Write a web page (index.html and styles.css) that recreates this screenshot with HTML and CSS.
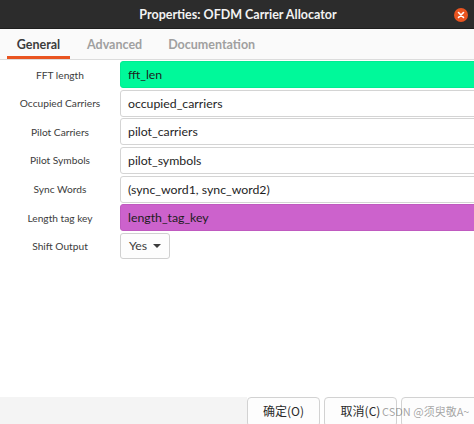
FILE: index.html
```html
<!DOCTYPE html>
<html>
<head>
<meta charset="utf-8">
<link rel="stylesheet" href="styles.css">
</head>
<body>
<div class="window">
  <div class="titlebar">
    <span class="title">Properties: OFDM Carrier Allocator</span>
    <span class="close"><svg width="14" height="14" viewBox="0 0 14 14"><circle cx="7" cy="7" r="7" fill="#e95420"/><path d="M4.5 4.5 L9.5 9.5 M9.5 4.5 L4.5 9.5" stroke="#fff" stroke-width="1.6" stroke-linecap="round"/></svg></span>
  </div>
  <div class="tabs">
    <div class="tab active">General</div>
    <div class="tab">Advanced</div>
    <div class="tab">Documentation</div>
  </div>
  <div class="form">
    <div class="label">FFT length</div><div class="field green">fft_len</div>
    <div class="label">Occupied Carriers</div><div class="field">occupied_carriers</div>
    <div class="label">Pilot Carriers</div><div class="field">pilot_carriers</div>
    <div class="label">Pilot Symbols</div><div class="field">pilot_symbols</div>
    <div class="label">Sync Words</div><div class="field">(sync_word1, sync_word2)</div>
    <div class="label">Length tag key</div><div class="field purple">length_tag_key</div>
    <div class="label">Shift Output</div><div class="combo-cell"><div class="combo">Yes <span class="arrow"></span></div></div>
  </div>
  <div class="spacer"></div>
  <div class="footer">
    <div class="footer-fill"></div>
    <div class="btn">确定(O)</div>
    <div class="btn">取消(C)</div>
    <div class="btn last"></div>
    <div class="watermark">CSDN @须臾敬A~</div>
  </div>
</div>
</body>
</html>
```
FILE: styles.css
```css
html, body {
  margin: 0;
  padding: 0;
  background: #ffffff;
}
body {
  width: 474px;
  height: 424px;
  overflow: hidden;
  font-family: Lato, "Noto Sans CJK SC", sans-serif;
}
.window {
  width: 474px;
  height: 424px;
  display: flex;
  flex-direction: column;
  position: relative;
}
.titlebar {
  height: 29px;
  flex: none;
  background: #2c2c2c;
  border-bottom: 1px solid #1e1e1e;
  box-sizing: border-box;
  display: flex;
  align-items: center;
  justify-content: center;
  position: relative;
}
.title {
  color: #f2f2f2;
  font-weight: bold;
  font-size: 12.5px;
  margin-left: 2px;
}
.close {
  position: absolute;
  right: 6px;
  top: 8px;
  width: 14px;
  height: 14px;
  display: flex;
}
.tabs {
  height: 31px;
  flex: none;
  box-sizing: border-box;
  border-bottom: 1px solid #dcdcdc;
  display: flex;
  padding-left: 7px;
  background: #fafafa;
}
.tab {
  font-size: 12.5px;
  font-weight: bold;
  color: #a0a0a0;
  display: flex;
  align-items: center;
  box-sizing: border-box;
  height: 30px;
  border-bottom: 3px solid transparent;
  padding-top: 3px;
}
.tab.active {
  color: #3c3c3c;
  border-bottom-color: #e95420;
  width: 63px;
  justify-content: center;
  margin-right: 17px;
}
.tab + .tab {
  margin-right: 26px;
}
.form {
  display: grid;
  grid-template-columns: 120px 364px;
  grid-auto-rows: 27px;
  row-gap: 1.67px;
  padding-top: 1px;
  width: 484px;
}
.label {
  font-size: 10.2px;
  color: #3c3c3c;
  display: flex;
  align-items: center;
  justify-content: center;
}
.field {
  box-sizing: border-box;
  border: 1px solid #d4d4d4;
  border-radius: 3px;
  background: #fff;
  font-size: 12.3px;
  color: #1e1e1e;
  display: flex;
  align-items: center;
  padding-left: 7px;
}
.field.green {
  background: #00f99a;
  border-color: #00ec92;
}
.field.purple {
  background: #cc62cc;
  border-color: #c05ac0;
}
.combo-cell {
  display: flex;
}
.combo {
  box-sizing: border-box;
  width: 50px;
  height: 26px;
  border: 1px solid #d0d0d0;
  border-radius: 3px;
  background: #fdfdfd;
  font-size: 12.3px;
  color: #3c3c3c;
  display: flex;
  align-items: center;
  padding-left: 8px;
  gap: 6px;
}
.arrow {
  width: 0;
  height: 0;
  border-left: 4px solid transparent;
  border-right: 4px solid transparent;
  border-top: 4px solid #3c3c3c;
}
.spacer {
  flex: 1;
}
.footer {
  height: 27px;
  flex: none;
  display: flex;
  position: relative;
}
.footer-fill {
  flex: none;
  width: 247px;
  background: #f4f4f4;
}
.btn {
  flex: none;
  box-sizing: border-box;
  width: 73px;
  height: 30px;
  border: 1px solid #d2d2d2;
  border-radius: 4px;
  background: #fdfdfd;
  font-size: 12px;
  color: #2a2a2a;
  display: flex;
  justify-content: center;
  align-items: center;
  padding-bottom: 3px;
  margin-left: 4px;
  font-family: "Noto Sans CJK SC", sans-serif;
}
.btn:nth-child(2) {
  margin-left: 0;
}
.btn.last {
  width: 80px;
}
.watermark {
  position: absolute;
  left: 382px;
  top: 6px;
  font-size: 11px;
  color: rgba(90, 90, 90, 0.55);
  font-family: "Noto Sans CJK SC", sans-serif;
  white-space: nowrap;
}
```
